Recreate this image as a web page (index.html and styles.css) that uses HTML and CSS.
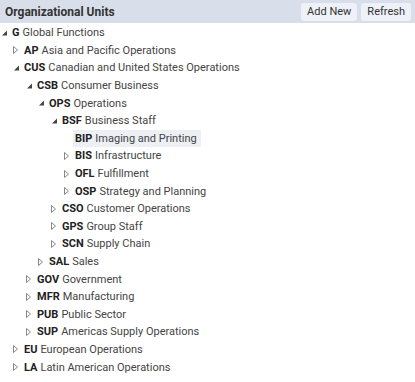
FILE: index.html
```html
<!doctype html>
<html lang="en">
  <head>
    <meta charset="UTF-8" />
    <title>Organizational Units</title>
    <link rel="stylesheet" href="styles.css">
  </head>
  <body>
    <div class="panel">
      <div class="panel-header">
        <span class="panel-title">Organizational Units</span>
        <div class="actions">
          <button class="btn">Add New</button>
          <button class="btn">Refresh</button>
        </div>
      </div>

      <ul class="tree">
        <li class="node open lvl0"><span class="toggle"></span><b>G</b> Global Functions</li>
        <li class="node lvl1"><span class="toggle"></span><b>AP</b> Asia and Pacific Operations</li>
        <li class="node open lvl1"><span class="toggle"></span><b>CUS</b> Canadian and United States Operations</li>
        <li class="node open lvl2"><span class="toggle"></span><b>CSB</b> Consumer Business</li>
        <li class="node open lvl3"><span class="toggle"></span><b>OPS</b> Operations</li>
        <li class="node open lvl4"><span class="toggle"></span><b>BSF</b> Business Staff</li>
        <li class="node leaf lvl5"><span class="label selected"><b>BIP</b> Imaging and Printing</span></li>
        <li class="node lvl5"><span class="toggle"></span><b>BIS</b> Infrastructure</li>
        <li class="node lvl5"><span class="toggle"></span><b>OFL</b> Fulfillment</li>
        <li class="node lvl5"><span class="toggle"></span><b>OSP</b> Strategy and Planning</li>
        <li class="node lvl4"><span class="toggle"></span><b>CSO</b> Customer Operations</li>
        <li class="node lvl4"><span class="toggle"></span><b>GPS</b> Group Staff</li>
        <li class="node lvl4"><span class="toggle"></span><b>SCN</b> Supply Chain</li>
        <li class="node lvl3"><span class="toggle"></span><b>SAL</b> Sales</li>
        <li class="node lvl2"><span class="toggle"></span><b>GOV</b> Government</li>
        <li class="node lvl2"><span class="toggle"></span><b>MFR</b> Manufacturing</li>
        <li class="node lvl2"><span class="toggle"></span><b>PUB</b> Public Sector</li>
        <li class="node lvl2"><span class="toggle"></span><b>SUP</b> Americas Supply Operations</li>
        <li class="node lvl1"><span class="toggle"></span><b>EU</b> European Operations</li>
        <li class="node lvl1"><span class="toggle"></span><b>LA</b> Latin American Operations</li>
      </ul>
    </div>
  </body>
</html>
```

FILE: styles.css
```css
* {
  margin: 0;
  padding: 0;
  box-sizing: border-box;
}

body {
  font-family: Roboto, 'Liberation Sans', sans-serif;
  font-size: 11px;
  color: #444;
  background: white;
}

.panel-header {
  display: flex;
  align-items: center;
  justify-content: space-between;
  height: 23px;
  padding: 0 4px 0 5px;
  background: #d9dfea;
}

.panel-title {
  font-size: 12px;
  font-weight: 700;
  color: #333;
}

.actions {
  display: flex;
  gap: 4px;
}

.btn {
  font-family: inherit;
  font-size: 11px;
  color: #333;
  background: #eef1f7;
  border: none;
  border-radius: 3px;
  height: 18px;
  padding: 0 6px;
}

.tree {
  list-style: none;
  padding-top: 1px;
}

.node {
  display: flex;
  align-items: center;
  height: 17.6px;
  white-space: nowrap;
}

.node b {
  color: #222;
  margin-right: 3px;
}

.toggle {
  width: 12px;
  height: 10px;
  flex-shrink: 0;
  background: url("data:image/svg+xml,%3Csvg xmlns='http://www.w3.org/2000/svg' width='12' height='10'%3E%3Cpath d='M1.5 1.5 L5.5 5 L1.5 8.5 Z' fill='none' stroke='%23888' stroke-width='1'/%3E%3C/svg%3E") no-repeat left center;
}

.node.open .toggle {
  background: url("data:image/svg+xml,%3Csvg xmlns='http://www.w3.org/2000/svg' width='12' height='10'%3E%3Cpath d='M7 2.5 L7 7.5 L2 7.5 Z' fill='%23444'/%3E%3C/svg%3E") no-repeat left center;
}

.label {
  display: flex;
  align-items: center;
  height: 17px;
  padding: 0 4px 0 2px;
  margin-left: -2px;
}

.label.selected {
  background: #eceff4;
}

.lvl0 { padding-left: 0; }
.lvl1 { padding-left: 12px; }
.lvl2 { padding-left: 25px; }
.lvl3 { padding-left: 37px; }
.lvl4 { padding-left: 50px; }
.lvl5 { padding-left: 63px; }
.leaf { padding-left: 75px; }
```
